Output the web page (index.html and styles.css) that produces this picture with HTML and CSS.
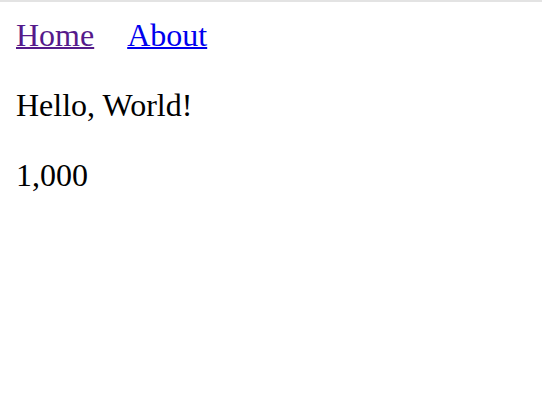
FILE: index.html
```html
<!DOCTYPE html>
<html>
<head lang="en">
    <meta charset="UTF-8">
    <title>Hello</title>
    <link rel="stylesheet" href="styles.css">
</head>
<body>
<div class="nav">
    <a href="#" class="visited">Home</a>
    <a href="#">About</a>
</div>
<p class="text">Hello, World!</p>
<p class="text">1,000</p>
</body>
</html>
```

FILE: styles.css
```css
*
{
    margin: 0;
    padding: 0;
}
body
{
    border-top: 2px solid #e3e3e3;
    padding: 0 16px;
    font-family: "Liberation Serif", "Times New Roman", serif;
    font-size: 32px;
    line-height: 36px;
    color: #000;
}
.nav
{
    display: flex;
    gap: 33px;
    margin-top: 15px;
}
.nav a
{
    color: #0000ee;
    text-decoration: underline;
    text-decoration-thickness: 2px;
}
.nav a.visited
{
    color: #551a8b;
}
.text
{
    margin-top: 34px;
}
```
